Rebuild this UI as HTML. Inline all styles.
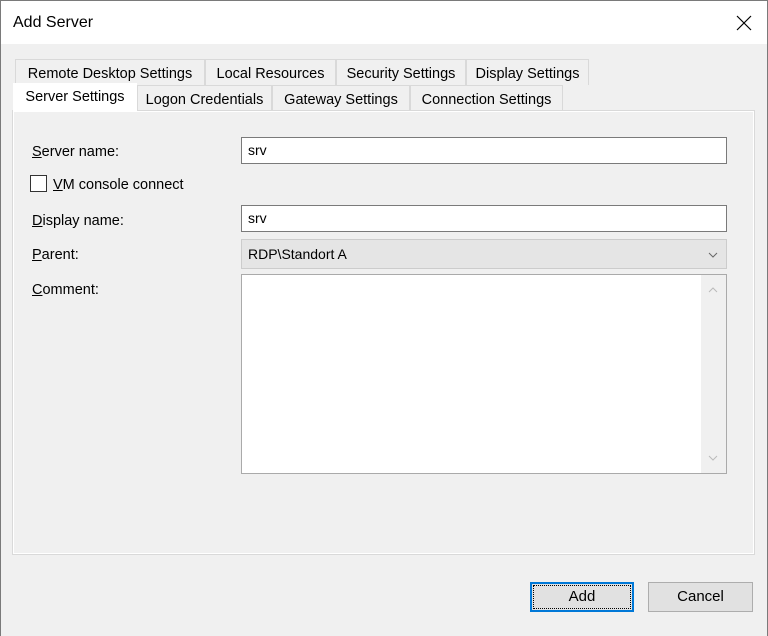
<!DOCTYPE html>
<html><head><style>
*{margin:0;padding:0;box-sizing:border-box}
body{width:768px;height:636px;background:#f0f0f0;font-family:"Liberation Sans",sans-serif;font-size:14px;color:#000;position:relative;overflow:hidden}
.abs{position:absolute}
#frame{left:0;top:0;width:768px;height:636px;border:1px solid #7a7a7a;border-bottom:none}
#title{left:1px;top:1px;width:766px;height:43px;background:#fff}
.tab{position:absolute;height:26px;border:1px solid #d9d9d9;border-bottom:none;background:#f0f0f0;font-size:14.5px;line-height:28px;text-align:center;white-space:nowrap}
#panel{left:13px;top:111px;width:741px;height:443px;background:#f0f0f0;border:1px solid #fff;outline:1px solid #d9d9d9}
.lbl{position:absolute;font-size:14.5px}
.inp{position:absolute;background:#fff;border:1px solid #7a7a7a;font-size:14px;padding-left:6px;line-height:25px}
.btn{position:absolute;top:582px;height:30px;background:#e1e1e1;border:1px solid #adadad;font-size:15px;text-align:center;line-height:27px}
</style></head><body>
<div class="abs" id="frame"></div>
<div class="abs" id="title"><span style="position:absolute;left:12px;top:13px;font-size:16px">Add Server</span>
<svg style="position:absolute;left:735px;top:14px" width="16" height="16"><path d="M1 1L15 15M15 1L1 15" stroke="#000" stroke-width="1.2"/></svg></div>

<div class="tab" style="left:15px;top:59px;width:190px">Remote Desktop Settings</div>
<div class="tab" style="left:205px;top:59px;width:131px">Local Resources</div>
<div class="tab" style="left:336px;top:59px;width:130px">Security Settings</div>
<div class="tab" style="left:466px;top:59px;width:123px">Display Settings</div>
<div class="tab" style="left:137px;top:85px;width:135px">Logon Credentials</div>
<div class="tab" style="left:272px;top:85px;width:138px">Gateway Settings</div>
<div class="tab" style="left:410px;top:85px;width:153px">Connection Settings</div>
<div class="abs" id="panel"></div>
<div class="tab" style="left:13px;top:83px;width:124px;height:29px;background:#fff;border-color:#fff;line-height:26px;z-index:2">Server Settings</div>

<div class="lbl" style="left:32px;top:144px"><u>S</u>erver name:</div>
<div class="inp" style="left:241px;top:137px;width:486px;height:27px">srv</div>
<div class="abs" style="left:30px;top:175px;width:17px;height:17px;background:#fff;border:1px solid #333"></div>
<div class="lbl" style="left:53px;top:177px"><u>V</u>M console connect</div>
<div class="lbl" style="left:32px;top:213px"><u>D</u>isplay name:</div>
<div class="inp" style="left:241px;top:205px;width:486px;height:27px">srv</div>
<div class="lbl" style="left:32px;top:247px"><u>P</u>arent:</div>
<div class="inp" style="left:241px;top:239px;width:486px;height:30px;background:#e5e5e5;border-color:#ccc;line-height:29px">RDP\Standort A
<svg style="position:absolute;right:8px;top:12px" width="10" height="6"><path d="M1 1L5 5L9 1" stroke="#666" fill="none"/></svg></div>
<div class="lbl" style="left:32px;top:282px"><u>C</u>omment:</div>
<div class="inp" style="left:241px;top:274px;width:486px;height:200px;border-color:#aaa">
<div style="position:absolute;right:0;top:0;width:25px;height:198px;background:#f0f0f0"></div>
<svg style="position:absolute;right:8px;top:12px" width="10" height="6"><path d="M1 5L5 1L9 5" stroke="#bbb" fill="none"/></svg>
<svg style="position:absolute;right:8px;bottom:12px" width="10" height="6"><path d="M1 1L5 5L9 1" stroke="#bbb" fill="none"/></svg></div>

<div class="btn" style="left:530px;width:104px;border:2px solid #0078d7;line-height:26px"><div style="position:absolute;left:1px;top:1px;right:1px;bottom:1px;border:1px dotted #000"></div>Add</div>
<div class="btn" style="left:648px;width:105px">Cancel</div>
</body></html>
